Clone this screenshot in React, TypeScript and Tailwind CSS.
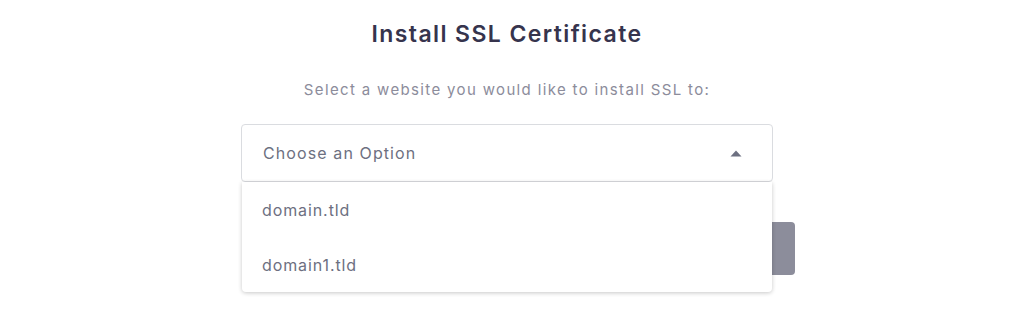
export default function App() {
  const options = ["domain.tld", "domain1.tld"];

  return (
    <div className="min-h-[322px] w-full bg-white font-['Inter','Noto_Sans',sans-serif]">
      <div className="flex flex-col items-center pr-[10px] pt-[20px]">
        <h1 className="text-[23px] font-semibold leading-[28px] tracking-[1.4px] text-[#36344d]">
          Install SSL Certificate
        </h1>
        <p className="mt-[32px] text-[15px] leading-[20px] tracking-[1.35px] text-[#8c8c9b]">
          Select a website you would like to install SSL to:
        </p>

        <div className="relative mt-[24px] w-[532px]">
          {/* Select */}
          <div className="flex h-[58px] items-center justify-between rounded-[4px] border border-[#dadce0] bg-white pl-[21px] pr-[30px]">
            <span className="text-[16px] tracking-[1.1px] text-[#6d7081]">Choose an Option</span>
            <svg width="12" height="7" viewBox="0 0 12 7" className="text-[#6d7081]">
              <path d="M6 0.5 L11.5 6.5 L0.5 6.5 Z" fill="currentColor" />
            </svg>
          </div>

          {/* Button below (covered by the open menu) */}
          <div className="mr-[-22px] mt-[40px] flex justify-end">
            <div className="h-[53px] w-[200px] rounded-[4px] bg-[#8c8d9b]" />
          </div>

          {/* Open menu */}
          <div className="absolute left-[1px] right-[1px] top-[58px] rounded-b-[4px] bg-white shadow-[0_1px_4px_rgba(0,0,0,0.22)]">
            {options.map((o) => (
              <div
                key={o}
                className="flex h-[55px] items-center px-[20px] text-[16px] tracking-[0.9px] text-[#6d7081]"
              >
                {o}
              </div>
            ))}
          </div>
        </div>
      </div>
    </div>
  );
}
